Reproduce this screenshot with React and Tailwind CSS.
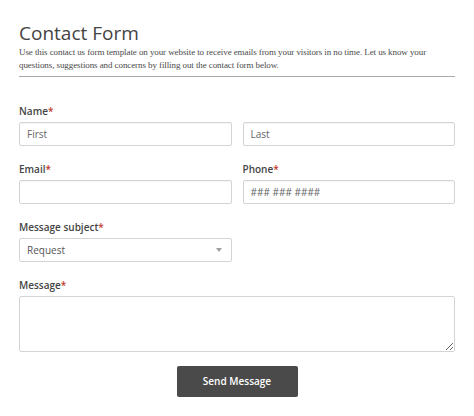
import React from "react";

const sans = { fontFamily: '"Open Sans", "Noto Sans", sans-serif' };

function Label({ children }) {
  return (
    <div className="text-[10px] leading-[16px] font-semibold text-[#444]" style={sans}>
      {children}
      <span className="text-[#c0392b]">*</span>
    </div>
  );
}

function Input({ placeholder }) {
  return (
    <input
      className="mt-[3px] block h-[24px] w-full rounded-[2px] border border-[#d4d4d4] bg-white px-[7px] text-[10px] text-[#555] placeholder:text-[#666] shadow-[inset_0_1px_1px_rgba(0,0,0,0.04)] outline-none"
      style={sans}
      placeholder={placeholder}
    />
  );
}

export default function App() {
  return (
    <div className="min-h-[416px] w-[474px] bg-white px-[19px] pt-[21px]" style={sans}>
      <h1 className="text-[19px] leading-[24px] font-normal text-[#444]">Contact Form</h1>
      <p
        className="mt-[1px] whitespace-nowrap border-b border-[#aaa] pb-[4px] text-[9px] tracking-[-0.09px] leading-[13px] text-[#4a4a4a]"
        style={{ fontFamily: '"Liberation Serif", "Times New Roman", serif' }}
      >
        Use this contact us form template on your website to receive emails from your visitors in no time. Let us know your
        <br />
        questions, suggestions and concerns by filling out the contact form below.
      </p>

      <div className="mt-[26px] grid grid-cols-2 gap-x-[11px]">
        <div>
          <Label>Name</Label>
          <Input placeholder="First" />
        </div>
        <div>
          <div className="h-[16px]" />
          <Input placeholder="Last" />
        </div>
      </div>

      <div className="mt-[15px] grid grid-cols-2 gap-x-[11px]">
        <div>
          <Label>Email</Label>
          <Input placeholder="" />
        </div>
        <div>
          <Label>Phone</Label>
          <Input placeholder="### ### ####" />
        </div>
      </div>

      <div className="mt-[15px] grid grid-cols-2 gap-x-[11px]">
        <div>
          <Label>Message subject</Label>
          <div className="mt-[3px] flex h-[24px] w-full items-center justify-between rounded-[2px] border border-[#d4d4d4] bg-white pl-[7px] pr-[9px] text-[10px] text-[#555]">
            <span>Request</span>
            <svg width="6" height="4" viewBox="0 0 6 4">
              <path d="M0 0 L6 0 L3 4 Z" fill="#a0a0a0" />
            </svg>
          </div>
        </div>
      </div>

      <div className="mt-[15px]">
        <Label>Message</Label>
        <textarea
          className="mt-[3px] block h-[56px] w-full rounded-[2px] border border-[#d4d4d4] bg-white px-[7px] text-[10px] outline-none"
          style={sans}
        />
      </div>

      <div className="mt-[14px] flex justify-center">
        <button
          className="h-[31px] w-[121px] rounded-[2px] bg-[#4a4a4a] text-[10px] font-semibold text-white"
          style={sans}
        >
          Send Message
        </button>
      </div>
    </div>
  );
}
